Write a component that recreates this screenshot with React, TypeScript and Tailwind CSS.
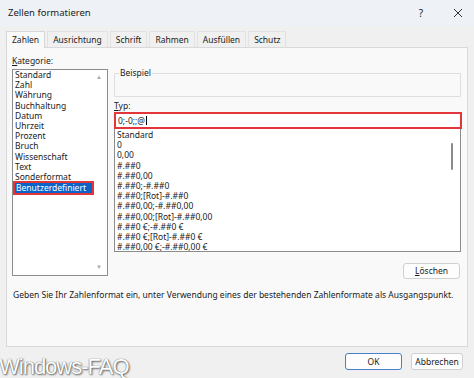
import React from "react";

const kategorien = [
  "Standard",
  "Zahl",
  "Währung",
  "Buchhaltung",
  "Datum",
  "Uhrzeit",
  "Prozent",
  "Bruch",
  "Wissenschaft",
  "Text",
  "Sonderformat",
];

const formate = [
  "Standard",
  "0",
  "0,00",
  "#.##0",
  "#.##0,00",
  "#.##0;-#.##0",
  "#.##0;[Rot]-#.##0",
  "#.##0,00;-#.##0,00",
  "#.##0,00;[Rot]-#.##0,00",
  "#.##0 €;-#.##0 €",
  "#.##0 €;[Rot]-#.##0 €",
  "#.##0,00 €;-#.##0,00 €",
];

const tabs = ["Zahlen", "Ausrichtung", "Schrift", "Rahmen", "Ausfüllen", "Schutz"];

export default function App() {
  return (
    <div className="relative w-[474px] h-[378px] overflow-hidden bg-[#f0f0f0] text-[#1a1a1a] font-['Noto_Sans',sans-serif] text-[8.5px] leading-[10px]">
      {/* Titelleiste */}
      <div className="h-[26px] bg-[#eef2f7] flex items-center pl-[8px] pr-[11px]">
        <span className="text-[9.5px] flex-1">Zellen formatieren</span>
        <span className="text-[10px] mr-[30px]">?</span>
        <svg width="10" height="10" viewBox="0 0 10 10">
          <path d="M1 1 L9 9 M9 1 L1 9" stroke="#333" strokeWidth="1" />
        </svg>
      </div>

      {/* Reiter */}
      <div className="flex h-[16px] mt-[5px] ml-[6px] items-stretch gap-[2px]">
        {tabs.map((t, i) => (
          <div
            key={t}
            className={`flex items-center justify-center px-[5px] border border-b-0 ${
              i === 0
                ? "bg-[#f9f9f9] border-[#d6d6d6] relative z-10 -mb-px"
                : "bg-[#f0f0f0] border-[#e2e2e2]"
            }`}
          >
            {t}
          </div>
        ))}
      </div>

      {/* Inhalt */}
      <div className="mx-[6px] h-[300px] bg-[#f9f9f9] border border-[#d9d9d9] flex flex-col">
        <div className="flex pl-[5px] pt-[8px]">
          {/* Kategorie */}
          <div className="w-[96px] flex flex-col">
            <div className="h-[11px]">
              <span className="underline">K</span>ategorie:
            </div>
            <div className="relative mt-[2px] h-[207px] bg-white border border-[#8c8c8c] pl-[2px]">
              {kategorien.map((k) => (
                <div key={k} className="h-[10.2px]">{k}</div>
              ))}
              <div className="-ml-[2px] -mt-[1px] w-[81px] border-2 border-[#e2363b]">
                <div className="bg-[#0a64c8] text-white pl-[1px] h-[10px] leading-[10px]">Benutzerdefiniert</div>
              </div>
              <span className="absolute right-[5px] top-[4px] text-[6px] leading-[6px] text-[#a8a8a8]">▲</span>
              <span className="absolute right-[5px] bottom-[5px] text-[6px] leading-[6px] text-[#a8a8a8]">▼</span>
            </div>
          </div>

          {/* Typ */}
          <div className="ml-[6px] w-[348px] flex flex-col">
            <div className="relative mt-[17px] h-[24px] mr-[1px] border border-[#dedede] rounded-[1px]">
              <span className="absolute -top-[6px] left-[4px] px-[1px] bg-[#f9f9f9]">Beispiel</span>
            </div>
            <div className="mt-[4px] h-[11px]">
              <span className="underline">T</span>yp:
            </div>
            <div className="h-[17px] border-2 border-[#e2363b] bg-white flex items-center pl-[2px]">
              0;-0;;@<span className="inline-block w-px h-[9px] bg-black ml-px" />
            </div>
            <div className="relative h-[123px] mr-[1px] bg-white border border-[#8c8c8c] border-t-0 pl-[2px] pt-[1px] overflow-hidden">
              {formate.map((f) => (
                <div key={f} className="whitespace-nowrap h-[10.2px]">{f}</div>
              ))}
              <div className="absolute right-[7px] top-[14px] w-[2px] h-[27px] rounded-full bg-[#8a8a8a]" />
            </div>
            <div className="flex justify-end mt-[11px] mr-[2px]">
              <div className="w-[57px] h-[16px] border border-[#d0d0d0] bg-[#fdfdfd] rounded-[3px] flex items-center justify-center">
                <span className="underline">L</span>öschen
              </div>
            </div>
          </div>
        </div>
        <div className="pl-[6px] mt-[11px] whitespace-nowrap">
          Geben Sie Ihr Zahlenformat ein, unter Verwendung eines der bestehenden Zahlenformate als Ausgangspunkt.
        </div>
      </div>

      {/* Schaltflächen */}
      <div className="flex justify-end gap-[9px] mt-[6px] mr-[11px]">
        <div className="w-[57px] h-[17px] border border-[#4a7fcf] bg-[#fdfdfd] rounded-[3px] flex items-center justify-center">
          OK
        </div>
        <div className="w-[52px] h-[17px] border border-[#d0d0d0] bg-[#fdfdfd] rounded-[3px] flex items-center justify-center">
          Abbrechen
        </div>
      </div>

      {/* Wasserzeichen */}
      <div className="absolute left-[-1px] top-[354px] text-[22px] leading-[26px] text-white font-['Liberation_Sans',sans-serif] tracking-[-1px] [text-shadow:0_0_1px_#444,1px_1px_2px_#666]">
        Windows-FAQ
      </div>
    </div>
  );
}
